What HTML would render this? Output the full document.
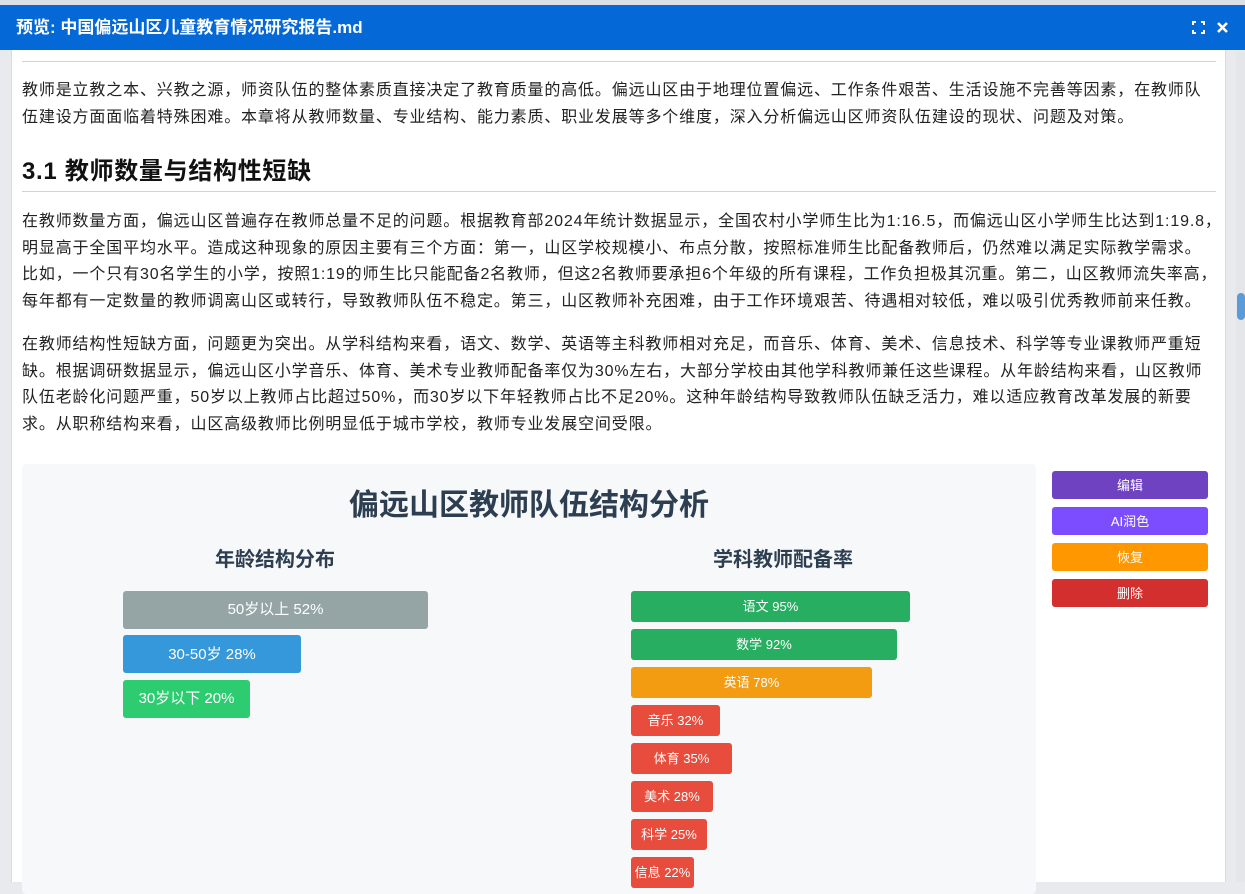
<!DOCTYPE html>
<html><head><meta charset="utf-8"><style>
*{margin:0;padding:0;box-sizing:border-box}
body{width:1245px;height:882px;overflow:hidden;background:#e9eaee;font-family:"Liberation Sans","Noto Sans CJK SC",sans-serif;position:relative}
.top{position:absolute;left:0;top:0;width:1245px;height:5px;background:#dcdfe4}
.hdr{position:absolute;left:0;top:5px;width:1245px;height:45px;background:#0468d7;color:#fff;font-weight:bold;font-size:17px;line-height:45px;padding-left:16px}
.content{position:absolute;left:11px;top:50px;width:1215px;height:832px;background:#fff;border-left:1px solid #d8dbe0;border-right:1px solid #d8dbe0}
.sb{position:absolute;left:1236px;top:52px;width:9px;height:830px;background:#e4e6ea}
.thumb{position:absolute;left:1237px;top:293px;width:8px;height:27px;background:#5b9bd8;border-radius:4px}
.hr{position:absolute;left:22px;width:1194px;height:1px;background:#d0d4da}
.p{position:absolute;left:22px;font-size:16px;color:#222;white-space:nowrap;letter-spacing:0.85px}
.p div{height:26.7px;line-height:26.7px}
h2{position:absolute;left:22px;top:156px;font-size:24px;font-weight:bold;color:#111;line-height:32px;letter-spacing:0.7px}
.chart{position:absolute;left:22px;top:464px;width:1014px;height:430px;background:#f7f8fa;border-radius:4px}
.t{position:absolute;color:#2c3e50;font-weight:bold;text-align:center;white-space:nowrap}
.bar{position:absolute;color:#fff;text-align:center;border-radius:3px;white-space:nowrap}
.bl{height:38px;line-height:38px;font-size:15px;left:123px}
.br{height:31px;line-height:32px;font-size:13px;left:631px}
.btn{position:absolute;left:1052px;width:156px;height:28px;line-height:29px;color:#fff;text-align:center;font-size:13px;border-radius:3px}
</style></head><body>
<div class="top"></div>
<div class="hdr">预览: 中国偏远山区儿童教育情况研究报告.md
<svg style="position:absolute;left:1192px;top:16px" width="13" height="13" viewBox="0 0 13 13" fill="none" stroke="#fff" stroke-width="2"><path d="M1 4V1h3M9 1h3v3M12 9v3H9M4 12H1V9"/></svg>
<svg style="position:absolute;left:1216px;top:16px" width="13" height="13" viewBox="0 0 13 13" stroke="#fff" stroke-width="2.6"><path d="M2 2l9 9M11 2l-9 9"/></svg>
</div>
<div class="content"></div>
<div class="sb"></div><div class="thumb"></div>
<div class="hr" style="top:61px"></div>
<div class="p" style="top:78px"><div>教师是立教之本、兴教之源，师资队伍的整体素质直接决定了教育质量的高低。偏远山区由于地理位置偏远、工作条件艰苦、生活设施不完善等因素，在教师队</div><div>伍建设方面面临着特殊困难。本章将从教师数量、专业结构、能力素质、职业发展等多个维度，深入分析偏远山区师资队伍建设的现状、问题及对策。</div></div>
<h2>3.1 教师数量与结构性短缺</h2>
<div class="hr" style="top:191px"></div>
<div class="p" style="top:209px"><div>在教师数量方面，偏远山区普遍存在教师总量不足的问题。根据教育部2024年统计数据显示，全国农村小学师生比为1:16.5，而偏远山区小学师生比达到1:19.8，</div><div>明显高于全国平均水平。造成这种现象的原因主要有三个方面：第一，山区学校规模小、布点分散，按照标准师生比配备教师后，仍然难以满足实际教学需求。</div><div>比如，一个只有30名学生的小学，按照1:19的师生比只能配备2名教师，但这2名教师要承担6个年级的所有课程，工作负担极其沉重。第二，山区教师流失率高，</div><div>每年都有一定数量的教师调离山区或转行，导致教师队伍不稳定。第三，山区教师补充困难，由于工作环境艰苦、待遇相对较低，难以吸引优秀教师前来任教。</div></div>
<div class="p" style="top:332px"><div>在教师结构性短缺方面，问题更为突出。从学科结构来看，语文、数学、英语等主科教师相对充足，而音乐、体育、美术、信息技术、科学等专业课教师严重短</div><div>缺。根据调研数据显示，偏远山区小学音乐、体育、美术专业教师配备率仅为30%左右，大部分学校由其他学科教师兼任这些课程。从年龄结构来看，山区教师</div><div>队伍老龄化问题严重，50岁以上教师占比超过50%，而30岁以下年轻教师占比不足20%。这种年龄结构导致教师队伍缺乏活力，难以适应教育改革发展的新要</div><div>求。从职称结构来看，山区高级教师比例明显低于城市学校，教师专业发展空间受限。</div></div>
<div class="chart"></div>
<div class="t" style="left:22px;width:1014px;top:486px;font-size:30px;line-height:40px">偏远山区教师队伍结构分析</div>
<div class="t" style="left:125px;width:300px;top:546px;font-size:20px;line-height:28px">年龄结构分布</div>
<div class="t" style="left:633px;width:300px;top:546px;font-size:20px;line-height:28px">学科教师配备率</div>
<div class="bar bl" style="top:591px;width:305px;background:#95a5a6">50岁以上 52%</div>
<div class="bar bl" style="top:635px;width:178px;background:#3498db;line-height:40px">30-50岁 28%</div>
<div class="bar bl" style="top:680px;width:127px;background:#2ecc71;line-height:38px">30岁以下 20%</div>
<div class="bar br" style="top:591px;width:279px;background:#27ae60">语文 95%</div>
<div class="bar br" style="top:629px;width:266px;background:#27ae60">数学 92%</div>
<div class="bar br" style="top:667px;width:241px;background:#f39c12">英语 78%</div>
<div class="bar br" style="top:705px;width:89px;background:#e74c3c">音乐 32%</div>
<div class="bar br" style="top:743px;width:101px;background:#e74c3c">体育 35%</div>
<div class="bar br" style="top:781px;width:82px;background:#e74c3c">美术 28%</div>
<div class="bar br" style="top:819px;width:76px;background:#e74c3c">科学 25%</div>
<div class="bar br" style="top:857px;width:63px;background:#e74c3c">信息 22%</div>
<div class="btn" style="top:471px;background:#6f42c1">编辑</div>
<div class="btn" style="top:507px;background:#7c4dff">AI润色</div>
<div class="btn" style="top:543px;background:#ff9800">恢复</div>
<div class="btn" style="top:579px;background:#d32f2f">删除</div>
</body></html>
